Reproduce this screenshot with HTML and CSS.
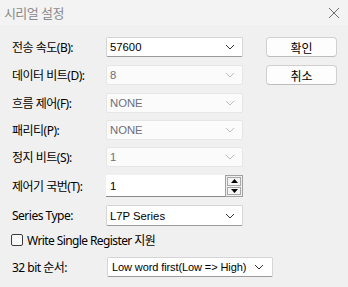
FILE: index.html
```html
<!DOCTYPE html>
<html lang="ko">
<head>
<meta charset="utf-8">
<link rel="stylesheet" href="styles.css">
</head>
<body>
<div class="window">
  <div class="titlebar">
    <span class="title">시리얼 설정</span>
    <svg class="close" width="12" height="12" viewBox="0 0 12 12"><path d="M1 1L11 11M11 1L1 11" stroke="#6e6e6e" stroke-width="1" fill="none"/></svg>
  </div>
  <div class="content">
    <div class="top">
      <div class="form">
        <div class="row r1">
          <span class="label">전송 속도(B):</span>
          <div class="combo"><span>57600</span><svg class="chev" width="10" height="6" viewBox="0 0 10 6"><path d="M1 1L5 5L9 1" stroke="#333" fill="none"/></svg></div>
        </div>
        <div class="row r2">
          <span class="label">데이터 비트(D):</span>
          <div class="combo disabled"><span>8</span><svg class="chev" width="10" height="6" viewBox="0 0 10 6"><path d="M1 1L5 5L9 1" stroke="#bdbdbd" fill="none"/></svg></div>
        </div>
        <div class="row r3">
          <span class="label">흐름 제어(F):</span>
          <div class="combo disabled"><span>NONE</span><svg class="chev" width="10" height="6" viewBox="0 0 10 6"><path d="M1 1L5 5L9 1" stroke="#bdbdbd" fill="none"/></svg></div>
        </div>
        <div class="row r4">
          <span class="label">패리티(P):</span>
          <div class="combo disabled"><span>NONE</span><svg class="chev" width="10" height="6" viewBox="0 0 10 6"><path d="M1 1L5 5L9 1" stroke="#bdbdbd" fill="none"/></svg></div>
        </div>
        <div class="row r5">
          <span class="label">정지 비트(S):</span>
          <div class="combo disabled"><span>1</span><svg class="chev" width="10" height="6" viewBox="0 0 10 6"><path d="M1 1L5 5L9 1" stroke="#bdbdbd" fill="none"/></svg></div>
        </div>
        <div class="row r6">
          <span class="label">제어기 국번(T):</span>
          <div class="spin">
            <div class="spin-text">1</div>
            <div class="spin-btns">
              <div class="sb"><svg width="7" height="4" viewBox="0 0 7 4"><path d="M0 4L3.5 0L7 4Z" fill="#000"/></svg></div>
              <div class="sb"><svg width="7" height="4" viewBox="0 0 7 4"><path d="M0 0L3.5 4L7 0Z" fill="#000"/></svg></div>
            </div>
          </div>
        </div>
        <div class="row r7">
          <span class="label">Series Type:</span>
          <div class="combo tall"><span>L7P Series</span><svg class="chev" width="10" height="6" viewBox="0 0 10 6"><path d="M1 1L5 5L9 1" stroke="#333" fill="none"/></svg></div>
        </div>
      </div>
      <div class="buttons">
        <div class="btn">확인</div>
        <div class="btn">취소</div>
      </div>
    </div>
    <div class="check-row">
      <span class="checkbox"></span>
      <span class="check-label">Write Single Register 지원</span>
    </div>
    <div class="row r9">
      <span class="label">32 bit 순서:</span>
      <div class="combo wide"><span>Low word first(Low =&gt; High)</span><svg class="chev" width="10" height="6" viewBox="0 0 10 6"><path d="M1 1L5 5L9 1" stroke="#333" fill="none"/></svg></div>
    </div>
  </div>
</div>
</body>
</html>
```
FILE: styles.css
```css
* { box-sizing: border-box; }
html, body { margin: 0; padding: 0; }
body {
  width: 348px;
  height: 287px;
  overflow: hidden;
  background: #f0f0f0;
  font-family: "Noto Sans", "Noto Sans CJK KR", sans-serif;
  font-size: 12px;
  color: #000;
}
.window { width: 348px; height: 287px; background: #f0f0f0; }
.titlebar {
  height: 25px;
  background: #f3f3f3;
  display: flex;
  align-items: center;
  justify-content: space-between;
  padding: 0 8px 0 4px;
}
.title {
  font-family: "Noto Sans CJK KR", sans-serif;
  font-size: 13px;
  color: #8a8a8a;
  letter-spacing: -0.6px;
}
.close { margin-top: 1px; }
.content { padding: 12px 0 0 12px; }
.top { display: flex; }
.form { width: 231px; }
.row { display: flex; align-items: center; height: 20px; }
.label {
  width: 94px;
  flex: none;
  letter-spacing: -0.5px;
  white-space: nowrap;
}
.r2, .r3 { margin-top: 8px; }
.r4, .r5 { margin-top: 7px; }
.r6 { margin-top: 8px; height: 22px; }
.r7 { margin-top: 8px; height: 21px; }
.combo {
  width: 137px;
  height: 100%;
  background: #fff;
  border: 1px solid #d5d5d5;
  border-bottom-color: #9a9a9a;
  border-radius: 2px;
  display: flex;
  align-items: center;
  justify-content: space-between;
  padding: 0 7px 0 3px;
  color: #000;
  font-family: "Liberation Sans", "Noto Sans CJK KR", sans-serif;
  font-size: 11.3px;
  white-space: nowrap;
}
.combo.disabled {
  background: #fbfbfb;
  border-color: #e6e6e6;
  color: #6f6f78;
}
.combo.wide {
  width: 166px;
  margin-left: 1px;
  padding: 0 8px 0 4px;
  font-size: 11px;
  letter-spacing: -0.1px;
}
.spin { display: flex; width: 137px; height: 22px; }
.spin-text {
  width: 119px;
  background: #fff;
  border-bottom: 1px solid #8a8a8a;
  padding: 2px 4px;
  display: flex;
  align-items: center;
  font-family: "Liberation Sans", sans-serif;
  font-size: 11.3px;
}
.spin-btns {
  width: 18px;
  border: 1px solid #a0a0a0;
  background: #f0f0f0;
  display: flex;
  flex-direction: column;
  padding: 1px;
  gap: 1px;
}
.sb {
  flex: 1;
  border: 1px solid #a8a8a8;
  background: #f4f4f4;
  display: flex;
  align-items: center;
  justify-content: center;
}
.buttons {
  margin-left: 23px;
  display: flex;
  flex-direction: column;
  gap: 8px;
}
.btn {
  width: 71px;
  height: 20px;
  background: #fdfdfd;
  border: 1px solid #d0d0d0;
  border-bottom-color: #bdbdbd;
  border-radius: 4px;
  display: flex;
  align-items: center;
  justify-content: center;
  font-family: "Noto Sans CJK KR", sans-serif;
  font-size: 12px;
}
.check-row {
  display: flex;
  align-items: center;
  margin-top: 8px;
  margin-left: -1px;
  height: 12px;
}
.checkbox {
  width: 12px;
  height: 12px;
  border: 1px solid #3c3c3c;
  border-radius: 2px;
  background: #f9f9f9;
  margin-right: 4px;
}
.check-label { letter-spacing: -0.6px; }
.r9 { margin-top: 11px; }
```
